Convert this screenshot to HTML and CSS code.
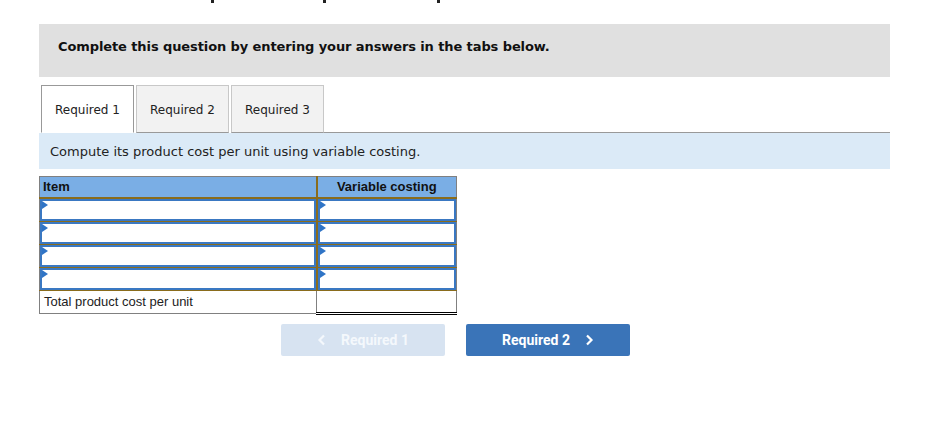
FILE: index.html
```html
<!DOCTYPE html>
<html lang="en">
<head>
    <meta charset="UTF-8">
    <title>Required 1</title>
    <link rel="stylesheet" href="styles.css">
</head>
<body>
    <div class="page">
        <!-- cut-off marks from the content above -->
        <div class="top-marks">
            <span class="mark m1"></span>
            <span class="mark m2"></span>
            <span class="mark m3"></span>
        </div>

        <div class="intro">Complete this question by entering your answers in the tabs below.</div>

        <!-- tabs -->
        <div class="tabs">
            <div class="tab active">Required 1</div>
            <div class="tab">Required 2</div>
            <div class="tab">Required 3</div>
            <div class="tab-rest"></div>
        </div>

        <div class="instruction">Compute its product cost per unit using variable costing.</div>

        <table class="answer-table">
            <thead>
                <tr>
                    <th class="col-item">Item</th>
                    <th class="col-value">Variable costing</th>
                </tr>
            </thead>
            <tbody>
                <tr class="input-row">
                    <td><div class="input"><span class="flag"></span></div></td>
                    <td><div class="input"><span class="flag"></span></div></td>
                </tr>
                <tr class="input-row">
                    <td><div class="input"><span class="flag"></span></div></td>
                    <td><div class="input"><span class="flag"></span></div></td>
                </tr>
                <tr class="input-row">
                    <td><div class="input"><span class="flag"></span></div></td>
                    <td><div class="input"><span class="flag"></span></div></td>
                </tr>
                <tr class="input-row">
                    <td><div class="input"><span class="flag"></span></div></td>
                    <td><div class="input"><span class="flag"></span></div></td>
                </tr>
                <tr class="total-row">
                    <td class="total-label">Total product cost per unit</td>
                    <td class="total-value"></td>
                </tr>
            </tbody>
        </table>

        <!-- navigation -->
        <div class="nav">
            <button class="nav-btn prev">
                <svg width="10" height="12" viewBox="0 0 10 12"><path d="M7 1.5 L2.5 6 L7 10.5" fill="none" stroke="currentColor" stroke-width="2.2"/></svg>
                <span>Required 1</span>
            </button>
            <button class="nav-btn next">
                <span>Required 2</span>
                <svg width="10" height="12" viewBox="0 0 10 12"><path d="M3 1.5 L7.5 6 L3 10.5" fill="none" stroke="currentColor" stroke-width="2.2"/></svg>
            </button>
        </div>
    </div>
</body>
</html>
```

FILE: styles.css
```css
* {
    margin: 0;
    padding: 0;
    box-sizing: border-box;
}

body {
    font-family: "DejaVu Sans", Verdana, sans-serif;
    background: #fff;
    color: #000;
}

.page {
    width: 890px;
    padding-left: 39px;
}

/* marks cut off at the top edge */
.top-marks {
    position: relative;
    height: 24px;
}

.mark {
    position: absolute;
    top: 0;
    width: 3px;
    height: 3px;
    background: #222;
}

.m1 { left: 172px; }
.m2 { left: 284px; }
.m3 { left: 398px; }

/* intro box */
.intro {
    height: 53px;
    background: #e0e0e0;
    padding: 15px 19px 0;
    font-size: 13px;
    font-weight: bold;
    color: #111;
    letter-spacing: -0.1px;
}

/* tabs */
.tabs {
    display: flex;
    align-items: flex-end;
    margin-top: 8px;
    padding-left: 2px;
    height: 48px;
}

.tab {
    width: 93px;
    height: 48px;
    margin-right: 2px;
    display: flex;
    align-items: center;
    justify-content: center;
    font-size: 12px;
    color: #222;
    background: #f2f2f2;
    border: 1px solid #c8c8c8;
    border-bottom: 1px solid #999;
    padding-top: 2px;
}

.tab.active {
    background: #fff;
    border: 1px solid #999;
    border-bottom: 1px solid #fff;
}

.tab-rest {
    flex: 1;
    border-bottom: 1px solid #999;
    margin-left: -2px;
}

/* instruction bar */
.instruction {
    height: 36px;
    background: #dbeaf7;
    padding: 11px 11px 0;
    font-size: 13px;
    color: #222;
}

/* table */
.answer-table {
    margin-top: 7px;
    border-collapse: collapse;
    font-family: "Liberation Sans", Arial, sans-serif;
    font-size: 13px;
    border: 1px solid #808080;
}

.answer-table th {
    height: 21px;
    padding: 0;
    background: #7aaee5;
    color: #111;
    font-weight: bold;
    border: 1px solid #808080;
    border-bottom: 2px solid #8a6c1c;
}

.col-item {
    width: 277px;
    text-align: left;
    padding-left: 3px !important;
}

.col-value {
    width: 140px;
    text-align: center;
    border-left: 2px solid #8a6c1c !important;
}

.input-row td {
    padding: 0;
    border-bottom: 1px solid #8a6c1c;
}

.input-row td + td {
    border-left: 2px solid #8a6c1c;
}

.input {
    position: relative;
    height: 22px;
    border: 2px solid #3a78c2;
    background: #fff;
}

.flag {
    position: absolute;
    top: 0;
    left: 0;
    width: 0;
    height: 0;
    border-top: 4px solid transparent;
    border-bottom: 4px solid transparent;
    border-left: 6px solid #2f74c6;
}

.total-row td {
    height: 23px;
    padding: 0;
}

.total-label {
    padding-left: 4px !important;
    color: #222;
    border-right: 1px solid #808080;
}

.total-value {
    border-top: 1px solid #000;
    border-bottom: 3px double #000;
}

/* navigation buttons */
.nav {
    display: flex;
    gap: 21px;
    margin-top: 9px;
    margin-left: 242px;
}

.nav-btn {
    width: 164px;
    height: 32px;
    border: none;
    border-radius: 2px;
    display: flex;
    align-items: center;
    justify-content: center;
    gap: 14px;
    font-family: Roboto, "Liberation Sans", sans-serif;
    font-size: 14px;
    font-weight: bold;
    color: #fff;
}

.nav-btn.prev {
    background: #d7e3f1;
    color: #f4f8fc;
}

.nav-btn.next {
    background: #3a74b8;
}
```
